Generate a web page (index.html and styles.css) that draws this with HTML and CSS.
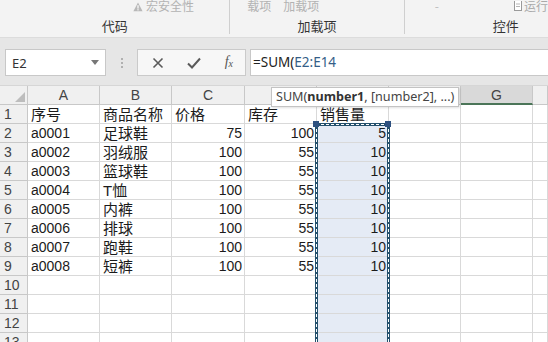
FILE: index.html
```html
<!DOCTYPE html>
<html lang="zh-CN">
<head>
<meta charset="utf-8">
<link rel="stylesheet" href="styles.css">
</head>
<body>
<div class="app">
  <div class="ribbon">
    <div class="group g1">
      <div class="top">
        <svg class="warn" width="10" height="10" viewBox="0 0 10 10"><path d="M5 0.5 L9.6 9.3 H0.4 Z" fill="#b8b8b8"/><rect x="4.4" y="3.2" width="1.2" height="3.4" fill="#fff"/><rect x="4.4" y="7.2" width="1.2" height="1.2" fill="#fff"/></svg>
        <span>宏安全性</span>
      </div>
      <div class="label">代码</div>
    </div>
    <div class="group g2">
      <div class="top"><span>载项</span><span class="gap">加载项</span></div>
      <div class="label">加载项</div>
    </div>
    <div class="group g3">
      <div class="top">
        <span class="dash">-</span>
        <svg class="doc" width="8" height="11" viewBox="0 0 8 11"><rect x="0.5" y="-1" width="7" height="10.5" fill="#fff" stroke="#9a9a9a"/><line x1="2" y1="3" x2="6" y2="3" stroke="#b5b5b5"/><line x1="2" y1="5.5" x2="6" y2="5.5" stroke="#b5b5b5"/></svg>
        <span>运行</span>
      </div>
      <div class="label">控件</div>
    </div>
  </div>

  <div class="fbar">
    <div class="namebox"><span>E2</span><svg width="8" height="5" viewBox="0 0 8 5"><path d="M0 0 H8 L4 5 Z" fill="#777"/></svg></div>
    <div class="dots"><i></i><i></i><i></i></div>
    <div class="btns">
      <svg width="12" height="12" viewBox="0 0 12 12"><path d="M1.5 1.5 L10.5 10.5 M10.5 1.5 L1.5 10.5" stroke="#5a5a5a" stroke-width="1.6"/></svg>
      <svg width="14" height="12" viewBox="0 0 14 12"><path d="M1 6.5 L5 10.5 L13 1.5" stroke="#5a5a5a" stroke-width="2" fill="none"/></svg>
      <span class="fx">f<sub>x</sub></span>
    </div>
    <div class="finput">=SUM(<span class="ref">E2:E14</span></div>
  </div>

  <div class="sheet">
    <div class="c corner"><svg width="10" height="10" viewBox="0 0 10 10"><path d="M10 0 V10 H0 Z" fill="#bdbdbd"/></svg></div>
    <div class="c h">A</div><div class="c h">B</div><div class="c h">C</div><div class="c h">D</div><div class="c h">E</div><div class="c h">F</div><div class="c h hsel">G</div><div class="c h"></div>

    <div class="c r">1</div><div class="c zh">序号</div><div class="c zh">商品名称</div><div class="c zh">价格</div><div class="c zh">库存</div><div class="c zh">销售量</div><div class="c"></div><div class="c"></div><div class="c"></div>

    <div class="c r">2</div><div class="c">a0001</div><div class="c zh">足球鞋</div><div class="c n">75</div><div class="c n">100</div><div class="c n s">5</div><div class="c"></div><div class="c"></div><div class="c"></div>
    <div class="c r">3</div><div class="c">a0002</div><div class="c zh">羽绒服</div><div class="c n">100</div><div class="c n">55</div><div class="c n s">10</div><div class="c"></div><div class="c"></div><div class="c"></div>
    <div class="c r">4</div><div class="c">a0003</div><div class="c zh">篮球鞋</div><div class="c n">100</div><div class="c n">55</div><div class="c n s">10</div><div class="c"></div><div class="c"></div><div class="c"></div>
    <div class="c r">5</div><div class="c">a0004</div><div class="c zh">T恤</div><div class="c n">100</div><div class="c n">55</div><div class="c n s">10</div><div class="c"></div><div class="c"></div><div class="c"></div>
    <div class="c r">6</div><div class="c">a0005</div><div class="c zh">内裤</div><div class="c n">100</div><div class="c n">55</div><div class="c n s">10</div><div class="c"></div><div class="c"></div><div class="c"></div>
    <div class="c r">7</div><div class="c">a0006</div><div class="c zh">排球</div><div class="c n">100</div><div class="c n">55</div><div class="c n s">10</div><div class="c"></div><div class="c"></div><div class="c"></div>
    <div class="c r">8</div><div class="c">a0007</div><div class="c zh">跑鞋</div><div class="c n">100</div><div class="c n">55</div><div class="c n s">10</div><div class="c"></div><div class="c"></div><div class="c"></div>
    <div class="c r">9</div><div class="c">a0008</div><div class="c zh">短裤</div><div class="c n">100</div><div class="c n">55</div><div class="c n s">10</div><div class="c"></div><div class="c"></div><div class="c"></div>
    <div class="c r">10</div><div class="c"></div><div class="c"></div><div class="c"></div><div class="c"></div><div class="c s"></div><div class="c"></div><div class="c"></div><div class="c"></div>
    <div class="c r">11</div><div class="c"></div><div class="c"></div><div class="c"></div><div class="c"></div><div class="c s"></div><div class="c"></div><div class="c"></div><div class="c"></div>
    <div class="c r">12</div><div class="c"></div><div class="c"></div><div class="c"></div><div class="c"></div><div class="c s"></div><div class="c"></div><div class="c"></div><div class="c"></div>
    <div class="c r">13</div><div class="c"></div><div class="c"></div><div class="c"></div><div class="c"></div><div class="c s"></div><div class="c"></div><div class="c"></div><div class="c"></div>

    <div class="range"></div>
    <div class="handle hl"></div>
    <div class="handle hr"></div>
    <div class="tip">SUM(<b>number1</b>, [number2], ...)</div>
  </div>
</div>
</body>
</html>
```

FILE: styles.css
```css
html, body {
  margin: 0;
  padding: 0;
  width: 548px;
  height: 342px;
  overflow: hidden;
  background: #fff;
}
.app {
  width: 548px;
  height: 342px;
  overflow: hidden;
  font-family: "Liberation Sans", "Noto Sans CJK SC", sans-serif;
  display: flex;
  flex-direction: column;
}

/* ribbon */
.ribbon {
  height: 38px;
  flex: none;
  background: #f3f3f3;
  display: flex;
  border-bottom: 1px solid #dcdcdc;
  box-sizing: border-box;
  overflow: hidden;
}
.group {
  height: 34px;
  display: flex;
  flex-direction: column;
  box-sizing: border-box;
}
.g1 { width: 231px; border-right: 1px solid #cfcfcf; }
.g2 { width: 175px; border-right: 1px solid #cfcfcf; }
.g3 { flex: 1; }
.top {
  height: 12px;
  margin-top: 0;
  display: flex;
  align-items: center;
  font-size: 12px;
  color: #b2b2b2;
  white-space: nowrap;
  font-family: "Noto Sans CJK SC", sans-serif;
  line-height: 12px;
}
.g1 .top { padding-left: 133px; gap: 3px; }
.warn { margin-top: 1px; }
.g2 .top { padding-left: 17px; }
.g2 .gap { margin-left: 12px; }
.g3 .top { padding-left: 30px; }
.dash { color: #bbb; }
.doc { margin-left: 75px; margin-top: 0; }
.g3 .top span:last-child { margin-left: 2px; color: #aaa; }
.label {
  margin-top: 7px;
  font-size: 13px;
  color: #333;
  text-align: center;
  line-height: 14px;
  font-family: "Noto Sans CJK SC", sans-serif;
}
.g3 .label { text-align: left; padding-left: 88px; }

/* formula bar */
.fbar {
  height: 47px;
  flex: none;
  background: #e6e6e6;
  display: flex;
  align-items: flex-start;
  padding-top: 11px;
  box-sizing: border-box;
}
.namebox {
  margin-left: 5px;
  width: 101px;
  height: 27px;
  box-sizing: border-box;
  background: #fff;
  border: 1px solid #c8c8c8;
  display: flex;
  align-items: center;
  justify-content: space-between;
  padding: 0 6px 0 6px;
  font-family: "Noto Sans", sans-serif;
  font-size: 13px;
  color: #333;
}
.dots {
  width: 31px;
  height: 27px;
  display: flex;
  flex-direction: column;
  align-items: center;
  justify-content: center;
  gap: 2px;
}
.dots i {
  width: 2px;
  height: 2px;
  background: #b0b0b0;
}
.btns {
  width: 109px;
  height: 27px;
  box-sizing: border-box;
  background: #f7f7f7;
  border: 1px solid #cacaca;
  display: flex;
  align-items: center;
  justify-content: space-between;
  padding: 0 12px 0 14px;
}
.fx {
  font-family: "Liberation Serif", serif;
  font-style: italic;
  font-size: 14px;
  color: #555;
  line-height: 14px;
}
.fx sub { font-size: 10px; vertical-align: -1px; }
.finput {
  flex: 1;
  margin-left: 4px;
  height: 27px;
  box-sizing: border-box;
  background: #fff;
  border: 1px solid #c8c8c8;
  border-right: none;
  padding-left: 2px;
  font-family: "Noto Sans", sans-serif;
  font-size: 13.5px;
  line-height: 25px;
  color: #222;
}
.ref { color: #355e87; }

/* sheet */
.sheet {
  position: relative;
  flex: 1;
  display: grid;
  grid-template-columns: 28px 72px 72px 73px 72px 72px 72px 72px 1fr;
  grid-auto-rows: 19px;
  background: #fff;
  border-top: 1px solid #d6d6d6;
}
.c {
  box-sizing: border-box;
  border-right: 1px solid #d9d9d9;
  border-bottom: 1px solid #d9d9d9;
  padding: 0 3px;
  line-height: 19px;
  font-size: 14px;
  color: #1b1b1b;
  white-space: nowrap;
  overflow: hidden;
}
.zh { font-size: 15px; }
.n { text-align: right; padding-right: 2px; }
.s { background: #e5ebf5; }
.corner {
  background: #f0f0f0;
  border-color: #c8c8c8;
  display: flex;
  align-items: flex-end;
  justify-content: flex-end;
  padding: 0 2px 2px 0;
}
.h {
  background: #f0f0f0;
  border-color: #c8c8c8;
  text-align: center;
  color: #444;
  font-size: 14px;
}
.hsel {
  background: #d9d9d9;
  border-bottom: 2px solid #4b7558;
}
.r {
  background: #f0f0f0;
  border-color: #c8c8c8;
  color: #444;
  padding-left: 4px;
  font-size: 14px;
}

.range {
  position: absolute;
  left: 315px;
  top: 37px;
  width: 75px;
  height: 260px;
  box-sizing: border-box;
  border: 3px solid #24506c;
}
.range::after {
  content: "";
  position: absolute;
  inset: -2px;
  border: 1px dashed #ffffff;
}
.handle {
  position: absolute;
  width: 6px;
  height: 6px;
  background: #2e5180;
  top: 35px;
}
.hl { left: 313px; }
.hr { left: 385px; }

.tip {
  position: absolute;
  left: 271px;
  top: 1px;
  height: 20px;
  box-sizing: border-box;
  padding: 0 4px 0 4px;
  background: #fff;
  border: 1px solid #c3c3c3;
  box-shadow: 1px 1px 2px rgba(0,0,0,0.12);
  font-family: "Noto Sans", sans-serif;
  font-size: 12.6px;
  line-height: 18px;
  color: #444;
  white-space: nowrap;
}
.tip b { color: #333; }
```
